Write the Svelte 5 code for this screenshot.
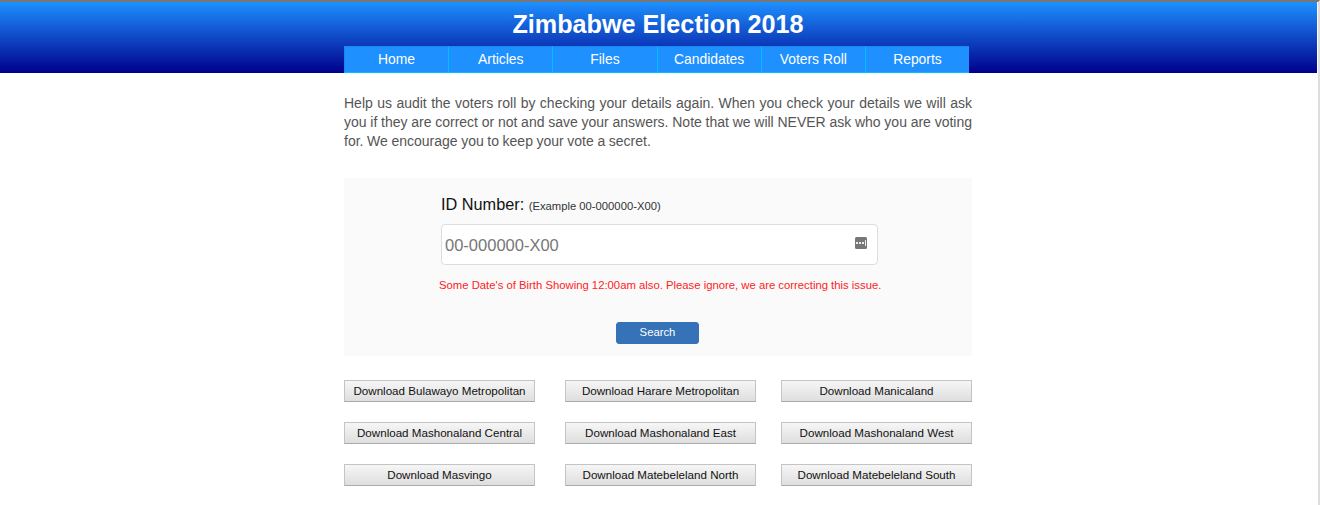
<script>
	const navItems = ['Home', 'Articles', 'Files', 'Candidates', 'Voters Roll', 'Reports']
	const provinces = [
		'Bulawayo Metropolitan',
		'Harare Metropolitan',
		'Manicaland',
		'Mashonaland Central',
		'Mashonaland East',
		'Mashonaland West',
		'Masvingo',
		'Matebeleland North',
		'Matebeleland South'
	]
</script>

<div class="page">
	<header>
		<h1>Zimbabwe Election 2018</h1>
		<nav>
			{#each navItems as item}
				<a href="#top">{item}</a>
			{/each}
		</nav>
	</header>

	<main>
		<p class="intro">
			Help us audit the voters roll by checking your details again. When you check your details we will ask
			you if they are correct or not and save your answers. Note that we will NEVER ask who you are voting
			for. We encourage you to keep your vote a secret.
		</p>

		<section class="search">
			<div class="label"><span class="label-main">ID Number:</span> <small>(Example 00-000000-X00)</small></div>
			<div class="field">
				<input type="text" placeholder="00-000000-X00" />
				<svg class="key" width="12" height="12" viewBox="0 0 12 12">
					<rect width="12" height="12" rx="1.5" fill="#777" />
					<rect x="1" y="5" width="2" height="2" fill="#eee" />
					<rect x="4" y="5" width="2" height="2" fill="#eee" />
					<rect x="7" y="5" width="2" height="2" fill="#eee" />
					<rect x="10" y="3" width="1" height="6" fill="#eee" />
				</svg>
			</div>
			<div class="notice">Some Date's of Birth Showing 12:00am also. Please ignore, we are correcting this issue.</div>
			<button class="primary">Search</button>
		</section>

		<div class="downloads">
			{#each provinces as name}
				<button class="download">Download {name}</button>
			{/each}
		</div>
	</main>
</div>

<style>
	:global(body) {
		background: #fff;
		font-family: 'Liberation Sans', Arial, sans-serif;
	}

	.page {
		height: 505px;
		box-sizing: border-box;
		overflow: hidden;
		border-top: 2px solid #777;
		border-right: 2px solid #ddd;
		padding-right: 2px;
	}

	header {
		height: 71px;
		margin-right: -1px;
		padding-right: 1px;
		background: linear-gradient(#1e90ff, #00008b);
		display: flex;
		flex-direction: column;
		align-items: center;
	}

	h1 {
		margin: 0;
		height: 44px;
		line-height: 44px;
		font-size: 25.2px;
		font-weight: bold;
		color: #fff;
		width: 628px;
		text-align: center;
	}

	nav {
		display: flex;
		width: 628px;
		height: 27px;
		box-sizing: border-box;
		padding-right: 3px;
	}

	nav a {
		flex: 1;
		background: #1e90ff;
		color: #fff;
		text-decoration: none;
		font-size: 13.9px;
		line-height: 25px;
		text-align: center;
		border-left: 1px solid #00bfff;
		border-bottom: 1px solid #00bfff;
		border-top: 1px solid #1a86ee;
	}

	nav a:first-child {
		border-left-color: #1a86ee;
	}

	main {
		width: 628px;
		margin: 0 auto;
	}

	.intro {
		margin: 21px 0 0;
		font-size: 14px;
		line-height: 19px;
		word-spacing: -0.3px;
		color: #555;
		text-align: justify;
	}

	.search {
		margin-top: 27px;
		height: 178px;
		background: #fafafa;
		padding: 0 0 0 97px;
		box-sizing: border-box;
		display: flex;
		flex-direction: column;
		align-items: flex-start;
	}

	.label {
		margin-top: 16px;
		line-height: 20px;
		color: #111;
	}

	.label-main {
		font-size: 16.3px;
	}

	small {
		font-size: 11.25px;
		color: #333;
	}

	.field {
		position: relative;
		margin-top: 8px;
		width: 437px;
	}

	input {
		display: block;
		width: 100%;
		height: 41px;
		box-sizing: border-box;
		border: 1px solid #ddd;
		border-radius: 4px;
		background: #fff;
		padding: 2px 3px 0;
		font: 16.5px 'Liberation Sans', Arial, sans-serif;
	}

	input::placeholder {
		color: #777;
		opacity: 1;
	}

	.key {
		position: absolute;
		right: 11px;
		top: 13px;
	}

	.notice {
		margin: 13px 0 0 -2px;
		font-size: 11.3px;
		line-height: 14px;
		color: #f22;
	}

	.primary {
		margin: 30px 0 0 175px;
		width: 83px;
		height: 22px;
		padding: 0 0 2px;
		background: #3572b8;
		border: 1px solid #3572b8;
		border-radius: 3px;
		color: #fff;
		font: 11.3px 'Liberation Sans', Arial, sans-serif;
	}

	.downloads {
		margin-top: 24px;
		display: grid;
		grid-template-columns: 221px 216px 191px;
		row-gap: 20px;
	}

	.download {
		width: 191px;
		height: 22px;
		padding: 0 0 2px;
		border: 1px solid #c4c4c4;
		border-bottom-color: #aaa;
		background: linear-gradient(#f6f6f6, #dedede);
		color: #111;
		font: 11.6px 'Liberation Sans', Arial, sans-serif;
	}
</style>
